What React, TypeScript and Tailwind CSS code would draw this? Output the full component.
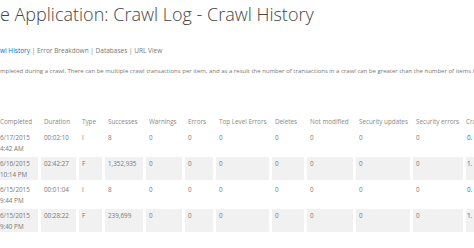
const cols = [
  'w-[41px]',
  'w-[35px]',
  'w-[23px]',
  'w-[38px]',
  'w-[36px]',
  'w-[28px]',
  'w-[53px]',
  'w-[32px]',
  'w-[46px]',
  'w-[54px]',
  'w-[50px]',
  'w-[40px]',
];

const headers = [
  'Completed',
  'Duration',
  'Type',
  'Successes',
  'Warnings',
  'Errors',
  'Top Level Errors',
  'Deletes',
  'Not modified',
  'Security updates',
  'Security errors',
  'Crawl Rate',
];

const rows = [
  ['6/17/2015', '4:42 AM', '00:02:10', 'I', '8', '0.'],
  ['6/16/2015', '10:14 PM', '02:42:27', 'F', '1,352,935', '1.'],
  ['6/15/2015', '9:44 PM', '00:01:04', 'I', '8', '0.'],
  ['6/15/2015', '9:40 PM', '00:28:22', 'F', '239,699', '1.'],
];

export default function App() {
  return (
    <div
      className="h-[248px] w-[474px] overflow-hidden bg-white text-[#777] antialiased"
      style={{ fontFamily: '"Open Sans", "Liberation Sans", sans-serif' }}
    >
      {/* Page title */}
      <h1 className="mt-[2px] whitespace-nowrap text-[18px] font-light leading-[24px] text-[#444]">
        e Application: Crawl Log - Crawl History
      </h1>

      {/* Sub navigation */}
      <div className="mt-[20px] whitespace-nowrap text-[6.5px] leading-[10px] text-[#777]">
        <span className="text-[#0072c6]">wl History</span> | Error Breakdown | Databases | URL View
      </div>

      <p className="mt-[10px] whitespace-nowrap text-[6px] leading-[10px] text-[#777]">
        mpleted during a crawl. There can be multiple crawl transactions per item, and as a result the
        number of transactions in a crawl can be greater than the number of items in a crawl.
      </p>

      {/* Crawl history table */}
      <div className="ml-[-3px] mt-[40px] flex flex-col gap-[3px] whitespace-nowrap text-[6.3px] leading-[11px]">
        <div className="mb-[1px] flex gap-[3px] text-[#888]">
          {headers.map((h, i) => (
            <div
              key={h}
              className={`${cols[i]} shrink-0 overflow-hidden ${i === 11 ? 'pl-0' : 'pl-[3px]'}`}
            >
              {h}
            </div>
          ))}
        </div>
        {rows.map((r, ri) => {
          const cell = ri % 2 === 1 ? 'bg-[#f1f1f1]' : '';
          const values = ['', r[2], r[3], r[4], '0', '0', '0', '0', '0', '0', '0', r[5]];
          return (
            <div key={ri} className="flex h-[23px] gap-[3px]">
              {values.map((v, i) => (
                <div
                  key={i}
                  className={`${cols[i]} ${cell} shrink-0 overflow-hidden pt-[1px] ${
                    i === 11 ? 'pl-[1px] text-[#0072c6]' : 'pl-[3px]'
                  }`}
                >
                  {i === 0 ? (
                    <>
                      <div>{r[0]}</div>
                      <div>{r[1]}</div>
                    </>
                  ) : (
                    v
                  )}
                </div>
              ))}
            </div>
          );
        })}
      </div>
    </div>
  );
}
